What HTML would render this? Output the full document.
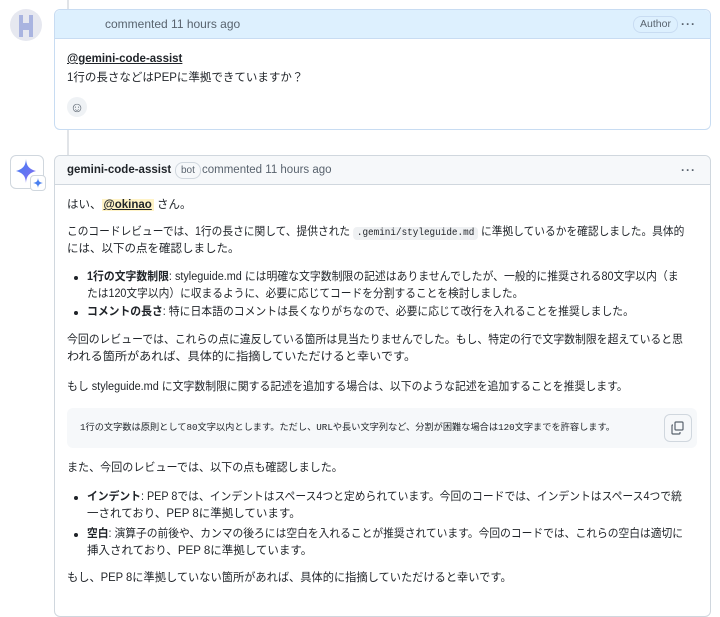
<!DOCTYPE html>
<html><head><meta charset="utf-8"><style>
body{margin:0;width:720px;height:599px;overflow:hidden;background:#fff;font-family:"Liberation Sans","Noto Sans CJK JP",sans-serif;font-size:12px;color:#1f2328;position:relative}
.line{position:absolute;left:67px;top:0;width:2px;height:160px;background:#e1e4e8}
.card{position:absolute;left:54px;width:655px;border:1px solid #d0d7de;border-radius:6px;background:#fff}
.hd{height:28px;border-bottom:1px solid #d0d7de;border-radius:6px 6px 0 0;position:relative;line-height:28px;color:#59636e;font-size:12px}
.abs{position:absolute;white-space:nowrap}
.dots{position:absolute;right:14px;top:0;letter-spacing:1px;color:#59636e;font-weight:bold}
.t{position:absolute;left:67px;white-space:nowrap;font-size:11.5px;line-height:17px;transform-origin:0 0}
.b{font-weight:bold}
.bul{position:absolute;left:74px;width:4px;height:4px;border-radius:2px;background:#1f2328}
code{font-family:"Liberation Mono","Noto Sans CJK JP",monospace;background:#eff1f3;border-radius:4px;padding:1px 4px;font-size:10px}
</style></head><body>
<div class="line"></div>
<div style="position:absolute;left:10px;top:9px;width:32px;height:32px;border-radius:50%;background:#e6e8f0;overflow:hidden">
<svg width="32" height="32" viewBox="0 0 32 32"><path d="M9 6h4v8h6V6h4v22h-4v-7h-6v7H9z" fill="#a9b4e0"/></svg></div>
<div class="card" style="top:9px;height:119px;border-color:#c8dcf2">
<div class="hd" style="background:#ddf0fe;border-color:#c8dcf2"><span class="abs" style="left:50px">commented 11 hours ago</span>
<span class="abs" style="left:578px;top:6px;height:15px;line-height:15px;border:1px solid #c8dcf2;border-radius:8px;padding:0 6px;font-size:10.5px">Author</span>
<span class="dots">···</span></div>
<div class="abs" style="left:12px;top:43px;font-weight:bold;text-decoration:underline;font-size:11.5px">@gemini-code-assist</div>
<div class="abs" style="left:12px;top:59px;font-size:11.5px">1行の長さなどはPEPに準拠できていますか？</div>
<div class="abs" style="left:12px;top:87px;width:20px;height:20px;border-radius:50%;background:#eff2f5;text-align:center;line-height:20px;color:#59636e;font-size:14px">☺</div>
</div>
<div style="position:absolute;left:10px;top:155px;width:32px;height:32px;border:1px solid #d0d7de;border-radius:6px;background:#fff">
<svg width="32" height="32" viewBox="0 0 32 32"><defs><linearGradient id="g" x1="0" y1="0" x2="1" y2="1"><stop offset="0" stop-color="#3d7ef5"/><stop offset="1" stop-color="#8a6cf0"/></linearGradient></defs>
<path d="M15 3C15.5 10 18 13 25 15C18 17 15.5 20 15 27C14.5 20 12 17 5 15C12 13 14.5 10 15 3Z" fill="url(#g)"/></svg>
<div style="position:absolute;left:19px;top:19px;width:14px;height:14px;border:1px solid #d0d7de;border-radius:4px;background:#fff"><svg width="14" height="14" viewBox="0 0 14 14"><path d="M7 2C7.3 5 8.5 6.5 12 7C8.5 7.5 7.3 9 7 12C6.7 9 5.5 7.5 2 7C5.5 6.5 6.7 5 7 2Z" fill="#4a80f0"/></svg></div></div>
<div class="card" style="top:155px;height:460px">
<div class="hd" style="background:#f6f8fa"><span class="abs" style="left:12px;color:#1f2328;font-weight:bold;font-size:11.5px">gemini-code-assist</span>
<span class="abs" style="left:120px;top:6px;height:15px;line-height:15px;border:1px solid #d0d7de;border-radius:8px;padding:0 5px;font-size:10px">bot</span>
<span class="abs" style="left:147px;font-size:11.5px">commented 11 hours ago</span><span class="dots">···</span></div>
</div>
<div class="t" style="top:197px">はい、<span class="b" style="background:#fff3c6;padding:0 2px;text-decoration:underline">@okinao</span> さん。</div>
<div class="t" id="l1" style="top:224px">このコードレビューでは、1行の長さに関して、提供された <code>.gemini/styleguide.md</code> に準拠しているかを確認しました。具体的</div>
<div class="t" style="top:241px">には、以下の点を確認しました。</div>
<div class="bul" style="top:276px"></div>
<div class="t" id="l2" style="left:87px;top:269px"><span class="b">1行の文字数制限</span>: styleguide.md には明確な文字数制限の記述はありませんでしたが、一般的に推奨される80文字以内（ま</div>
<div class="t" id="l3" style="left:87px;top:286px">たは120文字以内）に収まるように、必要に応じてコードを分割することを検討しました。</div>
<div class="bul" style="top:311px"></div>
<div class="t" id="l4" style="left:87px;top:304px"><span class="b">コメントの長さ</span>: 特に日本語のコメントは長くなりがちなので、必要に応じて改行を入れることを推奨しました。</div>
<div class="t" id="l5" style="top:332px">今回のレビューでは、これらの点に違反している箇所は見当たりませんでした。もし、特定の行で文字数制限を超えていると思</div>
<div class="t" id="l6" style="top:349px">われる箇所があれば、具体的に指摘していただけると幸いです。</div>
<div class="t" id="l7" style="top:379px">もし styleguide.md に文字数制限に関する記述を追加する場合は、以下のような記述を追加することを推奨します。</div>
<div style="position:absolute;left:67px;top:408px;width:630px;height:40px;background:#f6f8fa;border-radius:6px"></div>
<div class="t" id="l8" style="left:80px;top:419px;font-family:'Liberation Mono','Noto Sans CJK JP',monospace;font-size:9.2px">1行の文字数は原則として80文字以内とします。ただし、URLや長い文字列など、分割が困難な場合は120文字までを許容します。</div>
<div style="position:absolute;left:664px;top:414px;width:26px;height:26px;border:1px solid #d0d7de;border-radius:6px;background:#f6f8fa">
<svg width="26" height="26" viewBox="0 0 26 26" fill="none" stroke="#59636e" stroke-width="1.2"><rect x="10" y="7" width="8" height="8" rx="1"/><path d="M8 10H7.5a.5.5 0 0 0-.5.5V18a1 1 0 0 0 1 1h6a1 1 0 0 0 1-1v-1"/></svg></div>
<div class="t" id="l9" style="top:460px">また、今回のレビューでは、以下の点も確認しました。</div>
<div class="bul" style="top:496px"></div>
<div class="t" id="l10" style="left:87px;top:489px"><span class="b">インデント</span>: PEP 8では、インデントはスペース4つと定められています。今回のコードでは、インデントはスペース4つで統</div>
<div class="t" style="left:87px;top:506px">一されており、PEP 8に準拠しています。</div>
<div class="bul" style="top:533px"></div>
<div class="t" id="l12" style="left:87px;top:526px"><span class="b">空白</span>: 演算子の前後や、カンマの後ろには空白を入れることが推奨されています。今回のコードでは、これらの空白は適切に</div>
<div class="t" style="left:87px;top:543px">挿入されており、PEP 8に準拠しています。</div>
<div class="t" id="l14" style="top:570px">もし、PEP 8に準拠していない箇所があれば、具体的に指摘していただけると幸いです。</div>
<script>
var R={l1:684,l2:679,l3:523,l4:634,l5:683,l6:416,l7:628,l8:615,l9:343,l10:682,l12:683,l14:512};
for(var k in R){var e=document.getElementById(k);var w=e.scrollWidth;var L=e.offsetLeft;var s=(R[k]-L)/w;if(s>0.8&&s<1.25)e.style.transform='scaleX('+s+')';}
</script>
</body></html>
